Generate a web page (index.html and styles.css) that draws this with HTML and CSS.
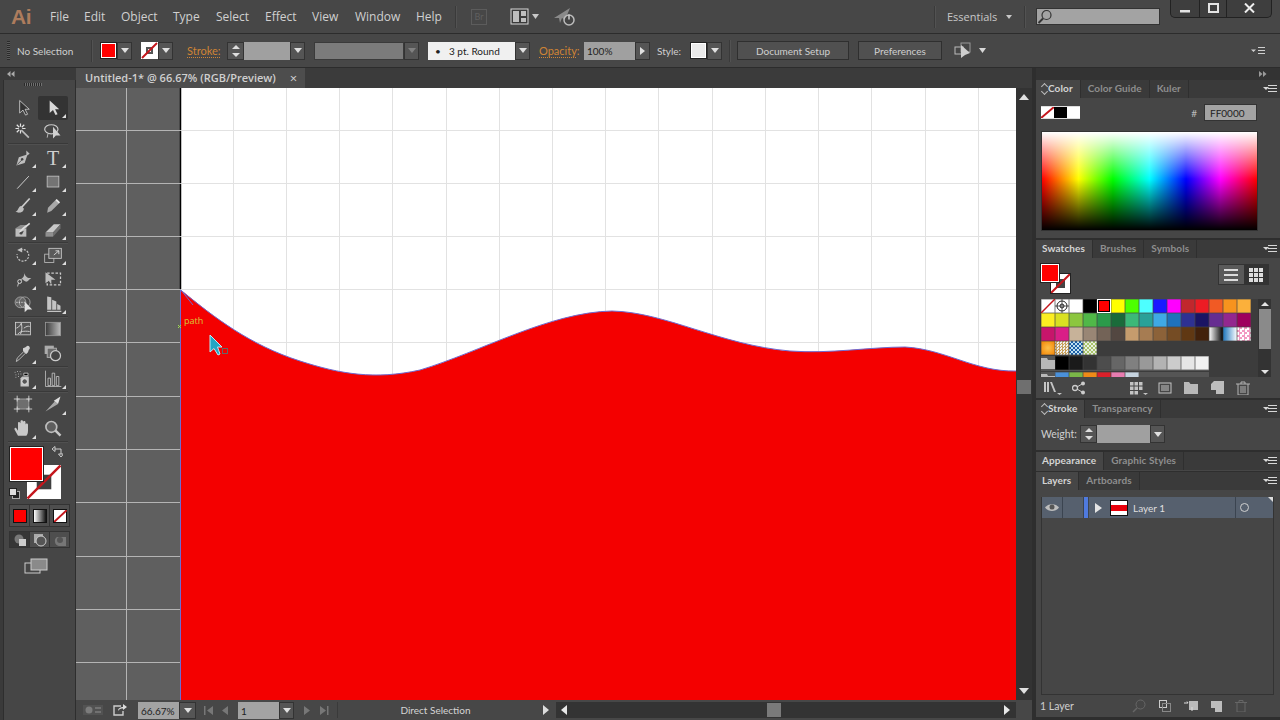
FILE: index.html
```html
<!DOCTYPE html>
<html lang="en">
<head>
<meta charset="utf-8">
<title>Adobe Illustrator</title>
<link rel="stylesheet" href="styles.css">
</head>
<body>
<div class="app">
  <header class="menubar">
    <span class="logo">Ai</span>
    <nav class="menu">
      <span class="m-file">File</span><span class="m-edit">Edit</span><span class="m-object">Object</span><span class="m-type">Type</span><span class="m-select">Select</span><span class="m-effect">Effect</span><span class="m-view">View</span><span class="m-window">Window</span><span class="m-help">Help</span>
    </nav>
    <i class="vsep sep-help"></i>
    <span class="br">Br</span>
    <svg class="arrange" width="30" height="18" viewBox="0 0 30 18"><rect x="1" y="1" width="17" height="15" fill="#3a3a3a" stroke="#d8d8d8"/><rect x="3" y="3" width="6" height="11" fill="#bdbdbd"/><rect x="11" y="3" width="5" height="5" fill="#bdbdbd"/><rect x="11" y="10" width="5" height="4" fill="#bdbdbd"/><path d="M22 6h7l-3.500 5z" fill="#c8c8c8"/></svg>
    <svg class="rocket" width="24" height="20" viewBox="0 0 24 20"><path d="M1 11 L17 1 L12 13 L9 11 L7 16 L6 11Z" fill="#8a8a8a"/><circle cx="16" cy="13" r="5" fill="#454545" stroke="#bdbdbd" stroke-width="1.500"/><path d="M16 7.500v5" stroke="#d0d0d0" stroke-width="1.500"/></svg>
    <span class="spring"></span>
    <i class="vsep"></i>
    <span class="essentials">Essentials</span>
    <svg class="ess-arrow" width="6" height="4" viewBox="0 0 6 4"><path d="M0 0h6L3 4z" fill="#c8c8c8"/></svg>
    <i class="vsep"></i>
    <span class="search"><svg width="16" height="16" viewBox="0 0 16 16"><circle cx="9.500" cy="6" r="4.500" fill="none" stroke="#333" stroke-width="1.200"/><path d="M6 9.500L1.500 14" stroke="#333" stroke-width="2"/></svg></span>
    <div class="winctl">
      <span><svg width="10" height="10" viewBox="0 0 10 10"><path d="M0 7h10v2.500H0z" fill="#e4e4e4"/></svg></span>
      <span><svg width="11" height="10" viewBox="0 0 11 10"><rect x="1" y="1" width="9" height="8" fill="none" stroke="#e4e4e4" stroke-width="2"/></svg></span>
      <span><svg width="11" height="10" viewBox="0 0 11 10"><path d="M1 0.500l9 9M10 0.500l-9 9" stroke="#eee" stroke-width="2"/></svg></span>
    </div>
  </header>

  <div class="controlbar">
    <i class="grip"></i>
    <span class="nosel">No Selection</span>
    <i class="vsep csep1"></i>
    <span class="swatchbox c-fill"><b class="red"></b></span><span class="drop"></span>
    <span class="swatchbox c-stroke"><svg width="17" height="17" viewBox="0 0 17 17"><rect width="17" height="17" fill="#fff"/><rect x="5" y="5" width="7" height="7" fill="#555"/><rect x="7" y="7" width="3" height="3" fill="#fff"/><path d="M1 16L16 1" stroke="#c4161c" stroke-width="2"/></svg></span><span class="drop"></span>
    <span class="olabel c-strokelabel">Stroke:</span>
    <span class="stepper c-step"></span><span class="field f-weight"></span><span class="drop"></span>
    <span class="field f-profile"></span><span class="drop dim"></span>
    <span class="field f-brush"><em>•</em>3 pt. Round</span><span class="drop"></span>
    <span class="olabel c-opacity">Opacity:</span>
    <span class="field f-opacity">100%</span><span class="drop side"></span>
    <span class="clabel c-style">Style:</span>
    <span class="swatchbox c-styleswatch"><b class="pale"></b></span><span class="drop"></span>
    <i class="vsep csep2"></i>
    <span class="btn b-doc">Document Setup</span>
    <span class="btn b-pref">Preferences</span>
    <svg class="c-align" width="18" height="17" viewBox="0 0 18 17"><rect x="1" y="5" width="8" height="7" fill="none" stroke="#bbb"/><rect x="7" y="1" width="9" height="9" fill="none" stroke="#999"/><path d="M7 3v13l4-3 5-2z" fill="#cfcfcf"/></svg>
    <svg class="c-alignarrow" width="7" height="5" viewBox="0 0 7 5"><path d="M0 0h7L3.500 5z" fill="#d8d8d8"/></svg>
    <span class="spring"></span>
    <svg class="menuicon m-control" width="14" height="8" viewBox="0 0 14 8"><path d="M0 2.500h5L2.500 5z M7 0h7v1H7z M7 3h7v1H7z M7 6h7v1H7z" fill="#cfcfcf"/></svg>
  </div>

  <div class="workspace">
    <aside class="toolbar">
      <div class="collapse-l"><svg width="8" height="6" viewBox="0 0 8 6"><path d="M3.500 0v6L0 3zM7.500 0v6L4 3z" fill="#aaa"/></svg></div>
      <div class="tools">
        <i class="tools-grip"></i>
        <div class="tool-group g2s">
          <span class="tool"><svg viewBox="0 0 24 24"><path d="M8 3v15l4-3.500 3 6 2.500-1-3-6h5z" fill="#333" stroke="#d0d0d0"/></svg></span>
          <span class="tool active more"><svg viewBox="0 0 24 24"><path d="M8 3v15l4-3.500 3 6 2.500-1-3-6h5z" fill="#d8d8d8"/></svg></span>
          <span class="tool"><svg viewBox="0 0 24 24"><path d="M10 11l9 9" stroke="#bbb" stroke-width="2"/><path d="M9 3v4M3 9h4M9 15v-4M15 9h-4M4.500 4.500l3 3M13.500 4.500l-3 3M4.500 13.500l3-3" stroke="#e4e4e4" stroke-width="1.400"/></svg></span>
          <span class="tool"><svg viewBox="0 0 24 24"><ellipse cx="10" cy="10" rx="8" ry="5.500" fill="none" stroke="#ccc" stroke-width="1.400"/><path d="M12 7v14l3.500-3.500H21z" fill="#d0d0d0"/><path d="M6 15l-1 5" stroke="#ccc"/></svg></span>
        </div>
        <div class="tool-group g4">
          <span class="tool more"><svg viewBox="0 0 24 24"><path d="M16 3l4 4-3 2-3 9-10 3 3-10 9-3z" fill="#bdbdbd"/><path d="M5 20l6-6" stroke="#444"/><circle cx="11" cy="13.500" r="1.500" fill="#444"/></svg></span>
          <span class="tool more"><span class="t-glyph">T</span></span>
          <span class="tool more"><svg viewBox="0 0 24 24"><path d="M5 20L19 5" stroke="#ccc" stroke-width="1.200"/></svg></span>
          <span class="tool more"><svg viewBox="0 0 24 24"><rect x="5" y="5" width="14" height="13" fill="#747474" stroke="#c4c4c4"/></svg></span>
          <span class="tool more"><svg viewBox="0 0 24 24"><path d="M20 3L10 14" stroke="#ccc" stroke-width="2"/><path d="M10 12c-4 0-3 6-7 7 4 2 10 1 10-4z" fill="#bdbdbd"/></svg></span>
          <span class="tool more"><svg viewBox="0 0 24 24"><path d="M5 20l1-6L16 4l4 4L10 18z" fill="#a8a8a8"/><path d="M15 5l4 4 1.500-1.500-4-4z" fill="#e4e4e4"/></svg></span>
          <span class="tool more"><svg viewBox="0 0 24 24"><path d="M3 10h13v10H3z" fill="#bdbdbd"/><path d="M3 10l6-4h9l-2 4z" fill="#8c8c8c"/><path d="M8 15c2-4 6-6 12-11" stroke="#ddd" stroke-width="2" fill="none"/><path d="M8 15c-1 2 1 3 3 2l2-4z" fill="#444"/></svg></span>
          <span class="tool more"><svg viewBox="0 0 24 24"><path d="M3 15l10-10h8l-9 10z" fill="#c8c8c8"/><path d="M3 15v5h9v-5z" fill="#8f8f8f"/><path d="M12 20l9-10V5l-9 10z" fill="#6f6f6f"/></svg></span>
        </div>
        <div class="tool-group g3">
          <span class="tool more"><svg viewBox="0 0 24 24"><path d="M9 6a7 7 0 1 1-4 5" fill="none" stroke="#c4c4c4" stroke-width="1.400" stroke-dasharray="2.500 1.500"/><path d="M5 6l6-3v6z" fill="#c4c4c4"/></svg></span>
          <span class="tool more"><svg viewBox="0 0 24 24"><rect x="2" y="11" width="11" height="10" fill="none" stroke="#bbb"/><rect x="7" y="4" width="15" height="12" fill="#5a5a5a" stroke="#ccc"/><path d="M13 12l6-5M15 7h4v4" stroke="#e4e4e4" fill="none"/></svg></span>
          <span class="tool more"><svg viewBox="0 0 24 24"><path d="M5 21c1-6 3-8 6-10s3-6 1-8l3 5c3 4 5 2 7 3-3 1-4 5-7 4s-3-4-5-2-3 5-4 8z" fill="#bbb"/><circle cx="8" cy="15" r="2.300" fill="#444" stroke="#eee"/></svg></span>
          <span class="tool"><svg viewBox="0 0 24 24"><rect x="5" y="5" width="16" height="14" fill="none" stroke="#ccc" stroke-width="1.500" stroke-dasharray="3 2"/><path d="M3 4v13l4-3 3 5V13h5z" fill="#bdbdbd"/></svg></span>
          <span class="tool"><svg viewBox="0 0 24 24"><circle cx="9" cy="10" r="6.500" fill="#666" stroke="#aaa"/><circle cx="14" cy="10" r="6.500" fill="none" stroke="#aaa"/><path d="M4 10h10" stroke="#eee" stroke-dasharray="1.500 1.500"/><path d="M14 9v13l3.500-3.500H23z" fill="#e0e0e0"/></svg></span>
          <span class="tool more"><svg viewBox="0 0 24 24"><path d="M5 3l5 1v15H5zM11 7l5 2v10h-5zM17 12l4 2v5h-4zM5 20h17v1.500H5z" fill="#c4c4c4"/></svg></span>
        </div>
        <div class="tool-group g2">
          <span class="tool"><svg viewBox="0 0 24 24"><rect x="3" y="4" width="18" height="15" fill="#555" stroke="#d0d0d0"/><path d="M4 11c4-1 5-5 6-6M10 5c1 5 1 9-1 13M6 18c2-3 7-4 14-3M13 11c3-2 5-3 7-2" stroke="#e0e0e0" fill="none"/></svg></span>
          <span class="tool"><svg viewBox="0 0 24 24"><defs><linearGradient id="gt"><stop offset="0" stop-color="#3a3a3a"/><stop offset="1" stop-color="#bbb"/></linearGradient></defs><rect x="3" y="4" width="18" height="16" fill="url(#gt)" stroke="#999"/></svg></span>
          <span class="tool more"><svg viewBox="0 0 24 24"><path d="M4 21l1-4 8-8 2 2-8 8z" fill="none" stroke="#ccc"/><path d="M12 8l4 4 2-2 1-3 1-1c1-3-2-5-4-3l-1 1-3 1z" fill="#d0d0d0"/></svg></span>
          <span class="tool"><svg viewBox="0 0 24 24"><rect x="2" y="2" width="11" height="10" fill="#aaa"/><rect x="5" y="5" width="11" height="11" fill="#6a6a6a" stroke="#bbb"/><circle cx="15" cy="14" r="6" fill="#454545" stroke="#ccc" stroke-width="1.500"/></svg></span>
        </div>
        <div class="tool-group g1">
          <span class="tool more"><svg viewBox="0 0 24 24"><path d="M11 9h8v12H9V11z" fill="#c4c4c4"/><circle cx="14" cy="15" r="3.300" fill="#555" stroke="#eee"/><path d="M13 5h5v3h-5zM2 4h1M5 3h1M8 3h1M3 7h1M6 6h1M9 6h1M3 10h1M6 9h1" stroke="#ccc"/></svg></span>
          <span class="tool more"><svg viewBox="0 0 24 24"><path d="M3 2v19h19" fill="none" stroke="#bbb"/><path d="M6 11h3v9H6zM11 5h3v15h-3zM16 9h3v11h-3z" fill="none" stroke="#c4c4c4"/></svg></span>
        </div>
        <div class="tool-group g2">
          <span class="tool"><svg viewBox="0 0 24 24"><rect x="5" y="6" width="14" height="12" fill="#6e6e6e" stroke="#aaa"/><path d="M1 6h7M16 6h7M1 18h7M16 18h7M5 2v7M19 2v7M5 15v7M19 15v7" stroke="#ddd"/></svg></span>
          <span class="tool more"><svg viewBox="0 0 24 24"><path d="M3 21L14 9l4 3-5 3z" fill="#a8a8a8"/><path d="M13 8l8-5-3 9z" fill="#e0e0e0"/></svg></span>
          <span class="tool more"><svg viewBox="0 0 24 24"><path d="M6 20l-4-7c-1-2 1-3 2-2l2 3V5c0-2 2-2 3 0V3c0-2 3-2 3 0v1c0-2 3-2 3 0v3c0-2 3-2 3 0v7c0 3-1 5-2 6z" fill="#c8c8c8"/></svg></span>
          <span class="tool"><svg viewBox="0 0 24 24"><circle cx="10" cy="9.500" r="6.500" fill="#5e5e5e" stroke="#bdbdbd" stroke-width="2"/><path d="M15 14l6 6" stroke="#c8c8c8" stroke-width="3"/></svg></span>
        </div>
        <div class="fillstroke">
          <span class="fs-stroke"><svg width="34" height="34" viewBox="0 0 35 35"><rect width="35" height="35" fill="#fff"/><rect x="10" y="10" width="15" height="15" fill="#3f3f3f"/><path d="M0.500 34.500L34.500 0.500" stroke="#c4161c" stroke-width="2.500"/></svg></span>
          <span class="fs-fill"></span>
          <svg class="fs-swap" width="11" height="11" viewBox="0 0 11 11"><path d="M3 3h6v5M0 3l3-2.500v5zM9 11L6.500 8h5z" fill="none" stroke="#ccc"/></svg>
          <svg class="fs-default" width="11" height="11" viewBox="0 0 11 11"><rect x="3.500" y="3.500" width="7" height="7" fill="#222" stroke="#aaa"/><rect x="0.500" y="0.500" width="7" height="7" fill="#ddd" stroke="#222"/></svg>
        </div>
        <div class="modebar">
          <span class="mode"><b class="m-red"></b></span>
          <span class="mode"><b class="m-grad"></b></span>
          <span class="mode"><b class="m-none"><svg width="13" height="12" viewBox="0 0 13 12"><path d="M0 12L13 0" stroke="#c4161c" stroke-width="2"/></svg></b></span>
        </div>
        <div class="modebar draw">
          <span class="mode on"><svg width="14" height="14" viewBox="0 0 14 14"><circle cx="6" cy="6" r="4.500" fill="#777"/><rect x="6" y="6" width="7" height="7" fill="#ccc"/></svg></span>
          <span class="mode"><svg width="14" height="14" viewBox="0 0 14 14"><rect x="1" y="1" width="9" height="9" fill="#aaa"/><circle cx="8" cy="8" r="5" fill="#555" stroke="#ccc"/></svg></span>
          <span class="mode"><svg width="14" height="14" viewBox="0 0 14 14"><path d="M4 4h9v9H6A5 5 0 0 1 4 4z" fill="#777"/><circle cx="7" cy="7" r="3" fill="#555"/></svg></span>
        </div>
        <div class="screenmode"><svg width="24" height="16" viewBox="0 0 24 16"><rect x="1" y="5" width="15" height="10" fill="#454545" stroke="#ccc"/><rect x="7" y="1" width="16" height="11" fill="#8a8a8a" stroke="#ccc"/></svg></div>
      </div>
    </aside>

    <main class="document">
      <div class="doctabs">
        <div class="doctab">Untitled-1* @ 66.67% (RGB/Preview)<span class="close">×</span></div>
      </div>
      <div class="viewrow">
        <div class="canvas">
          <svg class="artwork" width="940" height="612" viewBox="76 88 940 612">
            <rect x="76" y="88" width="105" height="612" fill="#5f5f5f"/>
            <rect x="181" y="88" width="835" height="612" fill="#fff"/>
            <path d="M180.500 88V290" stroke="#000" stroke-width="1.500"/>
            <g stroke="#b4b4b4"><path d="M126.500 88V700M76 130.500H181M76 183.500H181M76 236.500H181M76 289.500H181M76 342.500H181M76 396.500H181M76 449.500H181M76 502.500H181M76 556.500H181M76 609.500H181M76 662.500H181"/></g>
            <g stroke="#e2e2e2"><path d="M233.500 88V400M286.500 88V400M339.500 88V400M392.500 88V400M446.500 88V400M499.500 88V400M552.500 88V400M605.500 88V400M658.500 88V400M712.500 88V400M765.500 88V400M818.500 88V400M871.500 88V400M925.500 88V400M978.500 88V400M181 130.500H1016M181 183.500H1016M181 236.500H1016M181 289.500H1016M181 342.500H1016"/></g>
            <path d="M181 290C215 318 250 345 300 361C340 374 375 380 420 370C480 352 550 312 612 311C665 312 720 345 790 351C830 354 870 347 905 347C945 349 975 372 1016 371V700H181Z" fill="#f40000"/>
            <path d="M180.500 700V290C215 318 250 345 300 361C340 374 375 380 420 370C480 352 550 312 612 311C665 312 720 345 790 351C830 354 870 347 905 347C945 349 975 372 1016 371" fill="none" stroke="#6f6bd0"/>
            <path d="M181 290L193 305" stroke="#6f6bd0"/>
            <path d="M178 325l3 3m0-3l-3 3" stroke="#9fdc50"/>
            <text x="184" y="324" class="hint">path</text>
            <path d="M210 335V352L214 348.500L218 355L220 354L217.500 347H222Z" fill="#23a6c4" stroke="#b6ecf8" stroke-width="1"/>
            <rect x="222.500" y="348.500" width="5" height="5" fill="none" stroke="#666"/>
          </svg>
        </div>
        <div class="vscroll">
          <svg width="16" height="10" viewBox="0 0 16 10"><path d="M3 8h10L8 2z" fill="#e0e0e0"/></svg>
          <span class="vtrack"><i></i></span>
          <svg width="16" height="10" viewBox="0 0 16 10"><path d="M3 2h10L8 8z" fill="#e0e0e0"/></svg>
        </div>
      </div>
      <div class="statusbar">
        <svg class="st-gear" width="20" height="10" viewBox="0 0 20 10"><rect width="20" height="10" fill="#525252"/><circle cx="6" cy="5" r="3.500" fill="#7c7c7c"/><path d="M12 3h6M18 7h-6" stroke="#7c7c7c" stroke-width="1.500"/></svg>
        <svg class="st-share" width="14" height="12" viewBox="0 0 14 12"><path d="M8 2H1v9h9V7" fill="none" stroke="#ccc" stroke-width="1.400"/><path d="M5 7c0-3 3-4 5-4V0l4 3-4 3V4.500C8 4.500 6 5 5 7z" fill="#ddd"/></svg>
        <span class="field st-zoom">66.67%</span><span class="drop st-drop st-drop1"></span>
        <svg class="st-nav nav1" width="30" height="9" viewBox="0 0 30 9"><path d="M0 0h1.500v9H0zM9 0v9L3 4.500zM24 0v9l-6-4.500z" fill="#777"/></svg>
        <span class="field st-page">1</span><span class="drop st-drop"></span>
        <svg class="st-nav nav2" width="30" height="9" viewBox="0 0 30 9"><path d="M0 0v9l6-4.500zM16 0v9l6-4.500zM23 0h1.500v9H23z" fill="#777"/></svg>
        <i class="st-sep"></i>
        <span class="st-tool">Direct Selection</span>
        <svg class="st-more" width="7" height="10" viewBox="0 0 7 10"><path d="M0 0v10l6-5z" fill="#ddd"/></svg>
        <div class="hscroll">
          <svg width="16" height="10" viewBox="0 0 16 10"><path d="M11 0v10L5 5z" fill="#e8e8e8"/></svg>
          <span class="htrack"><i></i></span>
          <svg width="18" height="10" viewBox="0 0 18 10"><path d="M6 0v10l6-5z" fill="#e8e8e8"/></svg>
        </div>
        <span class="st-corner"></span>
      </div>
    </main>

    <aside class="panels">
      <div class="collapse-r"><svg width="8" height="6" viewBox="0 0 8 6"><path d="M0 0v6l3.500-3zM4 0v6l3.500-3z" fill="#999"/></svg></div>

      <section class="panel p-color">
        <div class="tabs"><span class="tab on updown">Color</span><span class="tab">Color Guide</span><span class="tab">Kuler</span><span class="spring"></span><span class="pmenu"></span></div>
        <div class="color-head">
          <span class="mini none"><svg width="13" height="11" viewBox="0 0 13 11"><path d="M0 11L13 0" stroke="#c4161c" stroke-width="2"/></svg></span><span class="mini black"></span><span class="mini white"></span>
          <span class="spring"></span>
          <span class="hash">#</span><span class="field hexfield">FF0000</span>
        </div>
        <div class="spectrum"></div>
      </section>

      <section class="panel p-swatches">
        <div class="tabs"><span class="tab on">Swatches</span><span class="tab">Brushes</span><span class="tab">Symbols</span><span class="spring"></span><span class="pmenu"></span></div>
        <div class="sw-head">
          <div class="sw-fs">
            <span class="sw-stroke"><svg width="19" height="19" viewBox="0 0 19 19"><rect width="19" height="19" fill="#fff"/><rect x="5" y="5" width="9" height="9" fill="#444"/><path d="M0 19L19 0" stroke="#c4161c" stroke-width="2"/></svg></span>
            <span class="sw-fill"></span>
          </div>
          <span class="spring"></span>
          <div class="viewtoggle">
            <span class="vt on"><svg width="14" height="14" viewBox="0 0 14 14"><path d="M0 1h14v2H0zM0 6h14v2H0zM0 11h14v2H0z" fill="#ddd"/></svg></span>
            <span class="vt"><svg width="14" height="14" viewBox="0 0 14 14"><path d="M0 0h4v4H0zM5 0h4v4H5zM10 0h4v4h-4zM0 5h4v4H0zM5 5h4v4H5zM10 5h4v4h-4zM0 10h4v4H0zM5 10h4v4H5zM10 10h4v4h-4z" fill="#ddd"/></svg></span>
          </div>
        </div>
        <div class="sw-box">
          <div class="sw-list">
            <div class="sw-grid">
              <span class="s" style="background:#fff"><svg width="14" height="14" viewBox="0 0 14 14"><path d="M0 14L14 0" stroke="#c4161c" stroke-width="1.500"/></svg></span>
              <span class="s" style="background:#fff"><svg width="14" height="14" viewBox="0 0 14 14"><circle cx="7" cy="7" r="5" fill="none" stroke="#222"/><circle cx="7" cy="7" r="2" fill="none" stroke="#222"/><path d="M7 0v14M0 7h14" stroke="#222" stroke-width="0.700"/></svg></span>
              <span class="s" style="background:#fff"></span>
              <span class="s" style="background:#000"></span>
              <span class="s cur" style="background:#f00"></span>
              <span class="s" style="background:#ff0"></span>
              <span class="s" style="background:#4dff00"></span>
              <span class="s" style="background:#4dffff"></span>
              <span class="s" style="background:#1a1aff"></span>
              <span class="s" style="background:#f0f"></span>
              <span class="s" style="background:#c1272d"></span>
              <span class="s" style="background:#ed1c24"></span>
              <span class="s" style="background:#f15a24"></span>
              <span class="s" style="background:#f7931e"></span>
              <span class="s" style="background:#fbb03b"></span>
              <span class="s" style="background:#fcee21"></span>
              <span class="s" style="background:#d9e021"></span>
              <span class="s" style="background:#8cc63f"></span>
              <span class="s" style="background:#50b848"></span>
              <span class="s" style="background:#2b9a4a"></span>
              <span class="s" style="background:#1a6b3a"></span>
              <span class="s" style="background:#3cb878"></span>
              <span class="s" style="background:#2aa198"></span>
              <span class="s" style="background:#3fa9e5"></span>
              <span class="s" style="background:#1f72bb"></span>
              <span class="s" style="background:#2e3192"></span>
              <span class="s" style="background:#1b1464"></span>
              <span class="s" style="background:#662d91"></span>
              <span class="s" style="background:#93278f"></span>
              <span class="s" style="background:#9e005d"></span>
              <span class="s" style="background:#c7156b"></span>
              <span class="s" style="background:#d91f87"></span>
              <span class="s" style="background:#c7b299"></span>
              <span class="s" style="background:#998675"></span>
              <span class="s" style="background:#736357"></span>
              <span class="s" style="background:#534741"></span>
              <span class="s" style="background:#c69c6d"></span>
              <span class="s" style="background:#a67c52"></span>
              <span class="s" style="background:#8c6239"></span>
              <span class="s" style="background:#754c24"></span>
              <span class="s" style="background:#603813"></span>
              <span class="s" style="background:#42210b"></span>
              <span class="s" style="background:linear-gradient(90deg,#fff,#000)"></span>
              <span class="s" style="background:linear-gradient(90deg,#1c75bc,#fff)"></span>
              <span class="s s-check"></span>
              <span class="s" style="background:radial-gradient(circle,#fcc04a,#f28000)"></span>
              <span class="s s-dots"></span>
              <span class="s s-blue"></span>
              <span class="s s-green"></span>
            </div>
            <div class="sw-group">
              <svg class="sw-folder" width="14" height="12" viewBox="0 0 14 12"><path d="M0 1h6l1 2h7v9H0z" fill="#b8b8b8"/></svg>
              <span class="s" style="background:#000"></span>
              <span class="s" style="background:#1a1a1a"></span>
              <span class="s" style="background:#333"></span>
              <span class="s" style="background:#4d4d4d"></span>
              <span class="s" style="background:#666"></span>
              <span class="s" style="background:#808080"></span>
              <span class="s" style="background:#999"></span>
              <span class="s" style="background:#b3b3b3"></span>
              <span class="s" style="background:#ccc"></span>
              <span class="s" style="background:#e6e6e6"></span>
              <span class="s" style="background:#f2f2f2"></span>
            </div>
            <div class="sw-group last">
              <svg class="sw-folder" width="14" height="12" viewBox="0 0 14 12"><path d="M0 1h6l1 2h7v9H0z" fill="#b8b8b8"/></svg>
              <span class="s" style="background:#4a90d9"></span>
              <span class="s" style="background:#7ab648"></span>
              <span class="s" style="background:#ef8a17"></span>
              <span class="s" style="background:#d9202a"></span>
              <span class="s" style="background:#e87cb0"></span>
              <span class="s" style="background:#c6d4e0"></span>
            </div>
          </div>
          <div class="sw-scroll">
            <svg width="12" height="10" viewBox="0 0 12 10"><path d="M2 7h8L6 3z" fill="#e4e4e4"/></svg>
            <span class="sw-track"><i></i></span>
            <svg width="12" height="10" viewBox="0 0 12 10"><path d="M2 3h8L6 7z" fill="#e4e4e4"/></svg>
          </div>
        </div>
        <div class="sw-foot">
          <svg class="f1" width="18" height="14" viewBox="0 0 18 14"><path d="M0 1h2v10H0zM3 1h2v10H3zM6 1l2 0 4 10h-2zM13 12h5l-2.500 2z" fill="#c4c4c4"/></svg>
          <svg class="f2" width="14" height="14" viewBox="0 0 14 14"><circle cx="3" cy="7" r="2.500" fill="none" stroke="#ccc" stroke-width="1.300"/><circle cx="11" cy="2.500" r="2" fill="#ccc"/><circle cx="11" cy="11.500" r="2" fill="#ccc"/><path d="M5 6l5-3M5 8l5 3" stroke="#ccc"/></svg>
          <svg class="f3" width="18" height="14" viewBox="0 0 18 14"><path d="M0 1h3.500v3.500H0zM4.500 1H8v3.500H4.500zM9 1h3.500v3.500H9zM0 5.500h3.500V9H0zM4.500 5.500H8V9H4.500zM9 5.500h3.500V9H9zM0 10h3.500v3.500H0zM4.500 10H8v3.500H4.500zM13 12h5l-2.500 2z" fill="#c4c4c4"/></svg>
          <svg class="f4" width="14" height="14" viewBox="0 0 14 14"><rect x="1" y="2" width="12" height="10" fill="none" stroke="#c4c4c4"/><path d="M3 5h8M3 7h8M3 9h8" stroke="#c4c4c4"/></svg>
          <svg class="f5" width="14" height="13" viewBox="0 0 14 13"><path d="M0 1h5l1.500 2H14v10H0z" fill="#b8b8b8"/></svg>
          <svg class="f6" width="13" height="13" viewBox="0 0 13 13"><path d="M3 0h10v13H5V9H0V3z" fill="#bdbdbd"/></svg>
          <svg class="f7" width="14" height="14" viewBox="0 0 14 14"><path d="M0 3h14M5 3V1h4v2M2 3v11h10V3M5 5v7M7 5v7M9 5v7" fill="none" stroke="#b4b4b4"/></svg>
        </div>
      </section>

      <section class="panel p-stroke">
        <div class="tabs"><span class="tab on updown">Stroke</span><span class="tab">Transparency</span><span class="spring"></span><span class="pmenu"></span></div>
        <div class="weight"><span class="clabel">Weight:</span><span class="stepper"></span><span class="field f-weight2"></span><span class="drop"></span></div>
      </section>

      <section class="panel p-appearance">
        <div class="tabs"><span class="tab on">Appearance</span><span class="tab">Graphic Styles</span><span class="spring"></span><span class="pmenu"></span></div>
      </section>

      <section class="panel p-layers">
        <div class="tabs"><span class="tab on">Layers</span><span class="tab">Artboards</span><span class="spring"></span><span class="pmenu"></span></div>
        <div class="layer-list">
          <div class="layer">
            <span class="l-eye"><svg width="14" height="9" viewBox="0 0 14 9"><path d="M0 4.500C3 0 11 0 14 4.500 11 9 3 9 0 4.500z" fill="#bdbdbd"/><circle cx="7" cy="4" r="2.500" fill="#555"/></svg></span>
            <span class="l-lock"></span>
            <span class="l-color"></span>
            <span class="l-arrow"><svg width="7" height="10" viewBox="0 0 7 10"><path d="M0 0v10l7-5z" fill="#e4e4e4"/></svg></span>
            <span class="l-thumb"></span>
            <span class="l-name">Layer 1</span>
            <span class="l-targetcell"><i class="l-target"></i></span>
          </div>
        </div>
        <div class="layers-foot">
          <span class="lf-count">1 Layer</span>
          <span class="spring"></span>
          <svg class="lf-i" width="14" height="14" viewBox="0 0 14 14"><circle cx="8.500" cy="5.500" r="4.500" fill="none" stroke="#666"/><path d="M5 9l-4 4" stroke="#666" stroke-width="1.500"/></svg>
          <svg class="lf-i" width="12" height="12" viewBox="0 0 12 12"><rect x="0.500" y="0.500" width="7" height="7" fill="none" stroke="#ccc"/><rect x="3.500" y="3.500" width="8" height="8" fill="none" stroke="#888"/></svg>
          <svg class="lf-i" width="14" height="10" viewBox="0 0 14 10"><path d="M5 0h9v9H5z" fill="#bbb"/><path d="M0 2h4l-1-1.500M8 6v4" stroke="#ddd" fill="none"/></svg>
          <svg class="lf-i" width="11" height="11" viewBox="0 0 11 11"><path d="M0 0h11v11H4V7H0z" fill="#bdbdbd"/></svg>
          <svg class="lf-i" width="12" height="12" viewBox="0 0 12 12"><path d="M0 2.500h12M4 2V0.500h4V2M2 3v9h8V3" fill="none" stroke="#666"/></svg>
        </div>
      </section>
    </aside>
  </div>
</div>
</body>
</html>
```

FILE: styles.css
```css
* { box-sizing: border-box; }
html, body { margin: 0; padding: 0; background: #464646; }
body { font-family: Lato, "Open Sans", sans-serif; font-size: 10px; color: #cfcfcf; overflow: hidden; }
.app { width: 1280px; height: 720px; display: flex; flex-direction: column; background: #464646; overflow: hidden; }
.spring { flex: 1 1 auto; }
i, em, b { font-style: normal; display: block; }
svg { display: block; flex: none; }

/* menu bar */
.menubar { height: 34px; display: flex; align-items: center; border-bottom: 1px solid #2c2c2c; background: #474747; flex: none; position: relative; }
.logo { width: 50px; padding-left: 11px; font: bold 21px "Liberation Sans", sans-serif; color: #ad7c5d; letter-spacing: -0.5px; }
.menu { display: flex; width: 405px; font-family: "Open Sans", sans-serif; font-size: 12px; color: #d0d0d0; }
.menu span { display: block; }
.m-file { width: 34px; } .m-edit { width: 37px; } .m-object { width: 52px; } .m-type { width: 43px; }
.m-select { width: 49px; } .m-effect { width: 47px; } .m-view { width: 43px; } .m-window { width: 61px; }
.vsep { width: 1px; height: 22px; background: #3a3a3a; box-shadow: 1px 0 0 #525252; flex: none; }
.br { width: 16px; height: 16px; margin-left: 15px; border: 1px solid #5c5c5c; color: #5f5f5f; font-size: 9px; line-height: 14px; text-align: center; }
.arrange { margin-left: 23px; }
.rocket { margin-left: 13px; }
.essentials { margin-left: 12px; font-family: "Open Sans", sans-serif; font-size: 11px; color: #c8c8c8; width: 59px; }
.ess-arrow { margin-right: 12px; }
.search { width: 124px; height: 17px; margin-left: 11px; background: #a3a3a3; border: 1px solid #333; }
.winctl { width: 102px; height: 18px; margin: -16px 8px 0 10px; display: flex; background: #3e3e3e; border: 1px solid #222; border-top: 0; border-radius: 0 0 5px 5px; }
.winctl span { display: flex; align-items: center; justify-content: center; flex: 1; border-left: 1px solid #222; }
.winctl span:first-child { border-left: 0; flex: 0 0 28px; }
.winctl span:nth-child(2) { flex: 0 0 27px; }

/* control bar */
.controlbar { height: 34px; flex: none; display: flex; align-items: center; border-bottom: 1px solid #2c2c2c; background: #474747; }
.grip { width: 3px; height: 19px; margin-left: 7px; background: repeating-linear-gradient(#2a2a2a 0 1px, #5a5a5a 1px 2px); }
.nosel { margin-left: 7px; width: 74px; font-size: 10px; color: #cfcfcf; white-space: nowrap; }
.csep1 { margin-right: 8px; }
.swatchbox { width: 17px; height: 17px; border: 1px solid #222; background: #fff; display: block; flex: none; }
.swatchbox b { width: 100%; height: 100%; border: 1px solid #fff; }
.swatchbox .red { background: #f00; }
.swatchbox .pale { background: #eaeaea; }
.c-stroke { margin-left: 9px; border: 0; }
.drop { width: 15px; height: 18px; background: #555; border: 1px solid #333; display: flex; align-items: center; justify-content: center; flex: none; }
.drop::after { content: ""; border: 4px solid transparent; border-top: 5px solid #e0e0e0; border-bottom: 0; }
.drop.dim::after { border-top-color: #808080; }
.drop.side::after { border: 4px solid transparent; border-left: 5px solid #e0e0e0; border-right: 0; }
.olabel { font-size: 11px; color: #cf8435; border-bottom: 1px dotted #cf8435; line-height: 13px; white-space: nowrap; }
.clabel { font-size: 10px; color: #cfcfcf; white-space: nowrap; }
.c-strokelabel { margin-left: 14px; width: 33px; }
.stepper { width: 17px; height: 18px; background: #555; border: 1px solid #333; position: relative; flex: none; margin-left: 7px; }
.stepper::before { content: ""; position: absolute; left: 4px; top: 2px; border: 4px solid transparent; border-bottom: 4px solid #ddd; border-top: 0; }
.stepper::after { content: ""; position: absolute; left: 4px; bottom: 2px; border: 4px solid transparent; border-top: 4px solid #ddd; border-bottom: 0; }
.field { height: 18px; background: #a0a0a0; display: block; flex: none; color: #222; font-size: 10px; line-height: 18px; padding-left: 3px; white-space: nowrap; }
.f-weight { width: 46px; }
.f-profile { width: 90px; margin-left: 9px; background: #7b7b7b; border: 1px solid #3a3a3a; }
.f-brush { width: 87px; margin-left: 9px; background: #f0f0f0; display: flex; }
.f-brush em { width: 18px; padding-left: 4px; }
.c-opacity { margin-left: 9px; width: 37px; }
.f-opacity { width: 51px; margin-left: 8px; }
.c-style { margin-left: 7px; width: 33px; }
.csep2 { margin: 0 7px 0 7px; }
.btn { height: 19px; background: #505050; border: 1px solid #2f2f2f; color: #cfcfcf; font-size: 10px; line-height: 18px; text-align: center; display: block; flex: none; }
.b-doc { width: 112px; }
.b-pref { width: 84px; margin-left: 9px; }
.c-align { margin-left: 12px; }
.c-alignarrow { margin-left: 7px; }
.m-control { margin-right: 15px; }

/* workspace */
.workspace { flex: 1 1 auto; display: flex; min-height: 0; background: #2e2e2e; }

/* toolbar */
.toolbar { width: 76px; flex: none; background: #3a3a3a; display: flex; flex-direction: column; }
.collapse-l { height: 12px; padding: 3px 0 0 7px; }
.tools { flex: 1; background: #464646; margin-left: 3px; border-left: 1px solid #2e2e2e; border-right: 1px solid #2e2e2e; display: flex; flex-direction: column; }
.tools-grip { height: 3px; width: 18px; margin: 3px 0 10px 20px; background: repeating-linear-gradient(90deg, #2a2a2a 0 1px, #707070 1px 2px); }
.tool-group { display: grid; grid-template-columns: 30px 30px; grid-auto-rows: 1fr; justify-content: start; margin: 0 7px 0 4px; border-bottom: 1px solid #393939; box-shadow: 0 1px 0 #505050; }
.g2s { height: 48px; padding-bottom: 0; }
.g4 { height: 99px; padding-top: 2px; }
.g3 { height: 74px; } .g2 { height: 50px; } .g1 { height: 25px; }
.tool { display: flex; align-items: center; justify-content: center; position: relative; }
.tool svg { width: 20px; height: 20px; }
.tool.active { background: #333; border-radius: 2px; }
.tool.more::after { content: ""; position: absolute; right: 2px; bottom: 2px; border-left: 4px solid transparent; border-bottom: 4px solid #ddd; }
.t-glyph { font: 20px "Liberation Serif", serif; color: #cfcfcf; }
.fillstroke { height: 62px; position: relative; flex: none; }
.fs-fill { position: absolute; left: 6px; top: 5px; width: 33px; height: 34px; background: #f00; border: 1px solid #fff; outline: 1px solid #222; }
.fs-stroke { position: absolute; left: 23px; top: 23px; }
.fs-swap { position: absolute; left: 48px; top: 4px; }
.fs-default { position: absolute; left: 5px; top: 46px; }
.modebar { display: flex; height: 23px; width: 61px; margin-left: 5px; flex: none; background: #333; padding: 1px; gap: 1px; }
.modebar.draw { height: 17px; margin-top: 4px; }
.mode { flex: 1; background: #4e4e4e; display: flex; align-items: center; justify-content: center; }
.mode.on { background: #363636; }
.mode b { width: 14px; height: 14px; border: 1px solid #111; }
.m-red { background: #f00; }
.m-grad { background: linear-gradient(90deg, #fff, #111); }
.m-none { background: #fff; }
.screenmode { margin: 10px 0 0 20px; }

/* document */
.document { flex: none; width: 956px; display: flex; flex-direction: column; min-width: 0; }
.doctabs { height: 20px; background: #3b3b3b; flex: none; }
.doctab { width: 229px; height: 20px; background: #4d4d4d; color: #d0d0d0; padding-left: 9px; font-family: "Open Sans", sans-serif; font-size: 11px; line-height: 20px; font-weight: 600; display: flex; white-space: nowrap; }
.close { margin-left: 14px; font-weight: normal; font-size: 13px; }
.viewrow { height: 612px; display: flex; flex: none; }
.canvas { width: 940px; height: 612px; position: relative; overflow: hidden; flex: none; }
.artwork { position: absolute; left: 0; top: 0; }
.hint { font: 9px "Open Sans", sans-serif; fill: #d8c83a; }
.vscroll { width: 16px; background: #333; display: flex; flex-direction: column; padding-top: 4px; padding-bottom: 4px; }
.vtrack { flex: 1; position: relative; display: block; }
.vtrack i { position: absolute; left: 1px; right: 1px; top: 278px; height: 14px; background: #6f6f6f; }
.statusbar { height: 20px; flex: none; display: flex; align-items: center; background: #474747; }
.st-gear { margin-left: 7px; }
.st-share { margin-left: 10px; }
.st-zoom { margin-left: 11px; width: 41px; height: 17px; line-height: 19px; background: #a3a3a3; }
.st-drop { height: 17px; }
.st-drop1 { width: 17px; }
.nav1 { margin-left: 8px; }
.st-page { margin-left: 4px; width: 41px; height: 17px; line-height: 19px; background: #a3a3a3; }
.nav2 { margin-left: 10px; }
.st-sep { width: 1px; height: 16px; background: #3a3a3a; margin-left: 3px; }
.st-tool { width: 205px; padding-right: 10px; text-align: center; font-size: 10px; color: #d4d4d4; white-space: nowrap; }
.hscroll { margin-left: 6px; height: 16px; width: 460px; display: flex; align-items: center; background: #333; flex: none; }
.htrack { flex: 1; height: 16px; position: relative; display: block; }
.htrack i { position: absolute; left: 195px; top: 1px; width: 14px; height: 14px; background: #7a7a7a; }
.st-corner { width: 16px; height: 20px; background: #474747; flex: none; }

/* panels */
.panels { width: 244px; margin-left: 4px; flex: none; display: flex; flex-direction: column; gap: 2px; background: #2e2e2e; }
.collapse-r { height: 12px; background: #333; display: flex; justify-content: flex-end; align-items: center; padding-right: 13px; margin-bottom: -2px; flex: none; }
.panel { background: #464646; flex: none; }
.tabs { height: 18px; display: flex; background: #3a3a3a; flex: none; }
.tab { display: block; height: 18px; line-height: 17px; padding: 0 7px; font-size: 10px; letter-spacing: 0.1px; color: #8e8e8e; font-weight: 700; border-right: 1px solid #2f2f2f; white-space: nowrap; }
.tab.on { background: #464646; color: #d4d4d4; padding-left: 6px; }
.tab.updown { padding-left: 12px; position: relative; }
.tab.updown::before { content: ""; position: absolute; left: 6px; top: 4px; width: 4px; height: 4px; border: 1px solid #bbb; border-right: 0; border-bottom: 0; transform: rotate(45deg); }
.tab.updown::after { content: ""; position: absolute; left: 6px; top: 9px; width: 4px; height: 4px; border: 1px solid #bbb; border-left: 0; border-top: 0; transform: rotate(45deg); }
.pmenu { width: 14px; height: 7px; margin: 5px 3px 0 0; background: linear-gradient(#d8d8d8 0 1px, transparent 1px 3px, #d8d8d8 3px 4px, transparent 4px 6px, #d8d8d8 6px 7px) no-repeat 5px 0 / 9px 7px; position: relative; }
.pmenu::before { content: ""; position: absolute; left: 0; top: 2px; border: 3px solid transparent; border-top: 3px solid #d8d8d8; border-bottom: 0; }
.p-color { height: 158px; }
.color-head { height: 32px; display: flex; align-items: center; padding: 0 23px 3px 5px; }
.mini { width: 13px; height: 13px; display: block; border-top: 1px solid #ddd; border-bottom: 1px solid #ddd; }
.mini.none { background: #fff; }
.mini.black { background: #000; }
.mini.white { background: #fff; }
.hash { margin-right: 7px; color: #bbb; font-size: 10px; }
.hexfield { width: 53px; height: 17px; line-height: 16px; padding-left: 5px; background: #a3a3a3; font-size: 10px; border: 1px solid #333; }
.spectrum { height: 100px; margin: 1px 22px 0 5px; border: 1px solid #333; background:
  linear-gradient(#fff 0%, rgba(255,255,255,0) 48%, rgba(0,0,0,0) 48%, #000 100%),
  linear-gradient(90deg, #f00 0%, #ff0 17%, #0f0 33%, #0ff 50%, #00f 67%, #f0f 83%, #f00 100%); }

.p-swatches { height: 158px; display: flex; flex-direction: column; }
.sw-head { height: 41px; display: flex; padding: 6px 11px 0 5px; flex: none; }
.sw-fs { width: 32px; height: 30px; position: relative; }
.sw-fill { position: absolute; left: 0; top: 0; width: 18px; height: 18px; background: #f00; border: 1px solid #fff; outline: 1px solid #222; }
.sw-stroke { position: absolute; left: 10px; top: 10px; outline: 1px solid #222; }
.viewtoggle { display: flex; width: 51px; height: 21px; background: #333; padding: 1px; margin-top: 0; }
.vt { flex: 1; display: flex; align-items: center; justify-content: center; }
.vt.on { background: #5a5a5a; }
.sw-box { height: 78px; margin: 0 9px 0 4px; display: flex; background: #3c3c3c; flex: none; overflow: hidden; }
.sw-list { width: 218px; overflow: hidden; padding-left: 1px; flex: none; }
.sw-grid { display: grid; grid-template-columns: repeat(15, 14px); grid-auto-rows: 14px; width: 210px; }
.s { display: block; width: 14px; height: 14px; box-shadow: inset 0 0 0 0.5px rgba(70,70,70,.7); }
.s.cur { box-shadow: inset 0 0 0 1px #fff, inset 0 0 0 2px #000; }
.s-check { background: repeating-conic-gradient(#f29ac2 0 25%, #fff 0 50%) 0 0 / 5px 5px; }
.s-dots { background: repeating-conic-gradient(#c9a15b 0 25%, #eee 0 50%) 0 0 / 3px 3px; }
.s-blue { background: repeating-conic-gradient(#1d5fa6 0 25%, #bfe0ef 0 50%) 0 0 / 4px 4px; }
.s-green { background: repeating-conic-gradient(#a8c46a 0 25%, #e9efe0 0 50%) 0 0 / 4px 4px; }
.sw-group { display: flex; height: 15px; align-items: flex-start; margin-top: 1px; background: #555; width: 168px; }
.sw-folder { width: 14px; margin-top: 1px; }
.sw-scroll { width: 13px; background: #333; display: flex; flex-direction: column; align-items: center; }
.sw-track { flex: 1; width: 12px; display: block; }
.sw-track i { height: 40px; background: #8a8a8a; }
.sw-foot { flex: 1; display: flex; align-items: center; padding-left: 8px; }
.f2 { margin-left: 10px; } .f3 { margin-left: 44px; } .f4 { margin-left: 10px; } .f5 { margin-left: 12px; } .f6 { margin-left: 13px; } .f7 { margin-left: 12px; }

.p-stroke { height: 50px; }
.weight { display: flex; align-items: center; padding: 7px 0 0 5px; }
.weight .clabel { width: 39px; font-size: 10.5px; }
.weight .stepper { margin-left: 0; }
.f-weight2 { width: 53px; }
.p-appearance { height: 19px; margin-bottom: -1px; }
.p-layers { flex: 1 1 auto; display: flex; flex-direction: column; min-height: 0; border-bottom: 3px solid #2e2e2e; }
.layer-list { flex: 1; margin: 7px 6px 0 5px; border: 1px solid #333; border-top: 0; min-height: 0; }
.layer { height: 21px; display: flex; align-items: center; background: #56606e; color: #dfdfdf; font-size: 10px; position: relative; }
.layer::after { content: ""; position: absolute; right: 0; top: 0; border-left: 5px solid transparent; border-top: 5px solid #ddd; }
.l-eye { width: 21px; height: 21px; display: flex; align-items: center; justify-content: center; border-right: 1px solid #3b4450; }
.l-lock { width: 21px; height: 21px; border-right: 1px solid #3b4450; display: block; }
.l-color { width: 5px; height: 21px; background: #4f7adf; display: block; border-right: 1px solid #3b4450; }
.l-arrow { width: 19px; display: flex; justify-content: center; }
.l-thumb { width: 18px; height: 16px; margin-left: 2px; border: 1px solid #111; background: linear-gradient(#fff 25%, #e8000b 25% 75%, #fff 75%); display: block; }
.l-name { margin-left: 5px; width: 102px; }
.l-targetcell { flex: 1; height: 21px; border-left: 1px solid #3b4450; padding: 6px 0 0 4px; display: block; }
.l-target { width: 9px; height: 9px; border: 1px solid #d0d0d0; border-radius: 50%; }
.layers-foot { height: 22px; display: flex; align-items: center; padding: 0 33px 0 4px; gap: 13px; flex: none; }
.lf-count { font-size: 10.5px; color: #cfcfcf; }
```
